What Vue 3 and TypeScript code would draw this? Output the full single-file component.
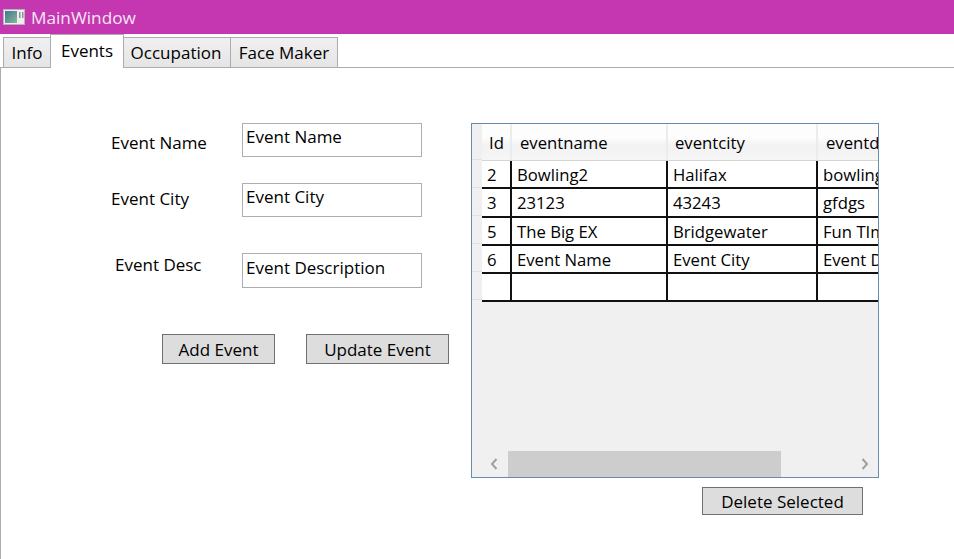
<script setup lang="ts">
const tabs = ['Info', 'Events', 'Occupation', 'Face Maker']
const rows = [
  ['2', 'Bowling2', 'Halifax', 'bowling'],
  ['3', '23123', '43243', 'gfdgs'],
  ['5', 'The Big EX', 'Bridgewater', 'Fun TIme'],
  ['6', 'Event Name', 'Event City', 'Event Description'],
  ['', '', '', ''],
]
const fields = [
  { label: 'Event Name', value: 'Event Name', cls: 'f1' },
  { label: 'Event City', value: 'Event City', cls: 'f2' },
  { label: 'Event Desc', value: 'Event Description', cls: 'f3' },
]
</script>

<template>
  <div class="window">
    <header class="titlebar">
      <svg class="appicon" width="22" height="16" viewBox="0 0 22 16">
        <defs>
          <linearGradient id="ig" x1="0" y1="0" x2="1" y2="1">
            <stop offset="0" stop-color="#3f7596" />
            <stop offset="1" stop-color="#86bb94" />
          </linearGradient>
        </defs>
        <rect x="0.5" y="0.5" width="21" height="15" fill="#eeeeee" stroke="#b4b4b4" />
        <rect x="2" y="2" width="12" height="12" fill="url(#ig)" />
        <rect x="16" y="3" width="1.5" height="6" fill="#8a9298" />
        <rect x="19" y="3" width="1.5" height="6" fill="#8a9298" />
      </svg>
      <span>MainWindow</span>
    </header>
    <nav class="tabs">
      <div v-for="t in tabs" :key="t" class="tab" :class="[t === 'Events' ? 'active' : '', 'tab-' + t.charAt(0)]">{{ t }}</div>
    </nav>
    <main class="panel">
      <section class="form">
        <div v-for="f in fields" :key="f.cls" class="field" :class="f.cls">
          <label>{{ f.label }}</label>
          <div class="input">{{ f.value }}</div>
        </div>
        <div class="actions">
          <button class="btn add">Add Event</button>
          <button class="btn update">Update Event</button>
        </div>
      </section>
      <section class="right">
        <div class="grid">
          <div class="rowheads">
            <div v-for="n in 6" :key="n" class="rowhead" :class="{ first: n === 1 }"></div>
          </div>
          <div class="tablewrap">
            <div class="headrow">
              <div class="hcell c0">Id</div>
              <div class="hcell c1">eventname</div>
              <div class="hcell c2">eventcity</div>
              <div class="hcell c3">eventdesc</div>
            </div>
            <div v-for="(r, i) in rows" :key="i" class="row">
              <div class="cell c0">{{ r[0] }}</div>
              <div class="cell c1">{{ r[1] }}</div>
              <div class="cell c2">{{ r[2] }}</div>
              <div class="cell c3">{{ r[3] }}</div>
            </div>
          </div>
          <div class="scrollbar">
            <svg class="arrow" width="8" height="12" viewBox="0 0 8 12"><path d="M6.5 1 L2 6 L6.5 11" fill="none" stroke="#a0a0a0" stroke-width="2" /></svg>
            <div class="track"><div class="thumb"></div></div>
            <svg class="arrow" width="8" height="12" viewBox="0 0 8 12"><path d="M1.5 1 L6 6 L1.5 11" fill="none" stroke="#a0a0a0" stroke-width="2" /></svg>
          </div>
        </div>
        <button class="btn delete">Delete Selected</button>
      </section>
    </main>
  </div>
</template>

<style>
html, body { margin: 0; background: #fff; }
</style>

<style scoped>
.window {
  width: 954px;
  height: 559px;
  display: flex;
  flex-direction: column;
  overflow: hidden;
  background: #fff;
  font-family: "Open Sans", "Noto Sans", sans-serif;
  font-size: 17px;
  color: #000;
}
.titlebar {
  height: 34px;
  flex: none;
  background: #c437b0;
  color: #f8e6f5;
  display: flex;
  align-items: center;
  gap: 6px;
  padding-left: 3px;
  box-sizing: border-box;
  font-size: 17.2px;
}
.appicon { flex: none; }
.tabs {
  height: 33px;
  flex: none;
  display: flex;
  align-items: flex-end;
  padding-left: 3px;
  box-sizing: border-box;
}
.tab {
  height: 30px;
  box-sizing: border-box;
  border: 1px solid #acacac;
  border-bottom: none;
  display: flex;
  align-items: center;
  justify-content: center;
  background: linear-gradient(#f0f0f0, #e5e5e5);
  white-space: nowrap;
}
.tab-I { width: 47px; border-right: none; }
.tab-E { width: 74px; }
.tab-O { width: 107px; border-left: none; padding-right: 2px; }
.tab-F { width: 107px; border-left: none; }
.tab.active {
  height: 34px;
  background: #fff;
  position: relative;
  z-index: 1;
  margin-bottom: -1px;
  padding-bottom: 3px;
}
.panel {
  flex: 1;
  display: flex;
  border-top: 1px solid #acacac;
  border-left: 1px solid #acacac;
  box-sizing: border-box;
  min-height: 0;
}
.form {
  width: 470px;
  flex: none;
  padding-top: 55px;
  box-sizing: border-box;
}
.field {
  display: flex;
  align-items: flex-start;
}
.f1 { height: 34px; margin-bottom: 26px; }
.f2 { height: 34px; margin-bottom: 36px; }
.f3 { height: 35px; margin-bottom: 46px; }
.field label { width: 131px; flex: none; padding-left: 110px; line-height: 22px; }
.f1 label { padding-top: 9px; }
.f2 label { padding-top: 5px; }
.f3 label { padding-top: 1px; padding-left: 114px; width: 127px; }
.input {
  width: 180px;
  box-sizing: border-box;
  border: 1px solid #abadb3;
  padding: 1px 3px;
  line-height: 24px;
  height: 100%;
}
.f3 .input { padding-top: 2px; }
.actions {
  display: flex;
  gap: 31px;
  padding-left: 161px;
}
.btn {
  font: inherit;
  color: #000;
  background: #dddddd;
  border: 1px solid #707070;
  height: 30px;
  padding: 0;
  display: block;
  box-sizing: border-box;
}
.add { width: 113px; }
.update { width: 143px; }
.right {
  flex: none;
  width: 408px;
  padding-top: 55px;
}
.grid {
  width: 408px;
  height: 355px;
  box-sizing: border-box;
  border: 1px solid #688caf;
  background: #f0f0f0;
  position: relative;
  overflow: hidden;
  font-size: 16.7px;
}
.rowheads {
  position: absolute;
  left: 0;
  top: 0;
  width: 10px;
}
.rowhead {
  height: 28px;
  box-sizing: border-box;
  border-bottom: 1px solid #e2e2e2;
}
.rowhead.first { height: 36px; }
.tablewrap { margin-left: 10px; }
.headrow, .row {
  display: grid;
  grid-template-columns: 30px 156px 150px 61px;
}
.headrow {
  height: 37px;
  background: linear-gradient(#fdfdfd 0 38%, #f2f2f3 60%, #f6f6f6);
  border-bottom: 1px solid #d5d5d5;
  box-sizing: border-box;
}
.hcell {
  padding-left: 8px;
  line-height: 38px;
  border-right: 2px solid #ececec;
  box-sizing: border-box;
  white-space: nowrap;
  overflow: hidden;
}
.hcell.c0, .hcell.c2 { padding-left: 7px; }
.row {
  height: 28px;
  box-sizing: border-box;
  background: #fff;
  border-bottom: 2px solid #111;
}
.row:nth-child(3) { height: 29px; }
.cell {
  padding-left: 5px;
  line-height: 28px;
  box-sizing: border-box;
  border-right: 2px solid #111;
  white-space: nowrap;
  overflow: hidden;
}
.cell.c3, .hcell.c3 { border-right: none; }
.scrollbar {
  position: absolute;
  left: 0;
  right: 0;
  bottom: 0;
  height: 26px;
  display: flex;
  align-items: center;
  padding-left: 18px;
  padding-right: 9px;
  background: #f0f0f0;
}
.track {
  flex: 1;
  height: 26px;
  margin: 0 14px 0 10px;
}
.thumb {
  width: 273px;
  height: 100%;
  background: #cdcdcd;
}
.delete {
  width: 161px;
  height: 28px;
  margin: 9px 0 0 231px;
}
</style>
